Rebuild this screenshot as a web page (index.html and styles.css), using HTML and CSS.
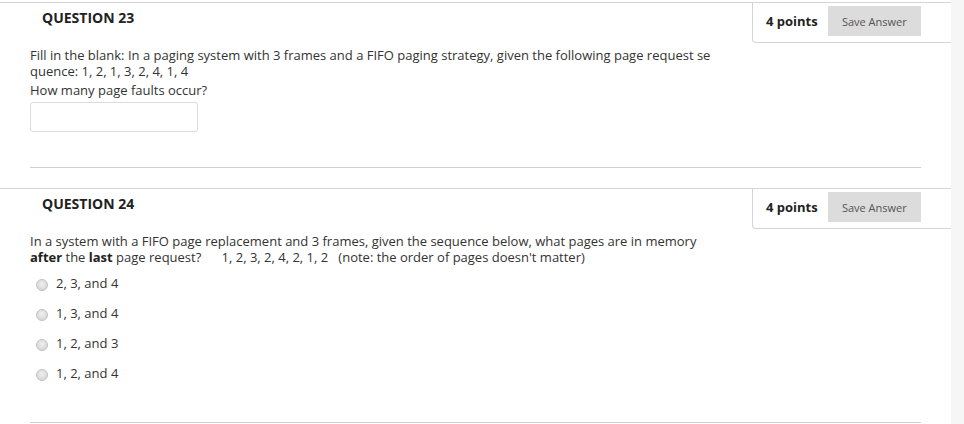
FILE: index.html
```html
<!DOCTYPE html>
<html>
<head>
<meta charset="utf-8">
<link rel="stylesheet" href="styles.css">
</head>
<body>
<div class="page">
  <main class="main">
    <section class="question">
      <div class="qhead">
        <h2 class="qtitle">QUESTION 23</h2>
        <div class="points">
          <span class="pts">4 points</span>
          <button class="save">Save Answer</button>
        </div>
      </div>
      <div class="qbody">
        <p class="qtext">Fill in the blank: In a paging system with 3 frames and a FIFO paging strategy, given the following page request se<br>quence: 1, 2, 1, 3, 2, 4, 1, 4</p>
        <p class="qtext qtext-next">How many page faults occur?</p>
        <input class="answer" type="text">
      </div>
      <div class="sep sep1"></div>
    </section>
    <section class="question q2">
      <div class="qhead">
        <h2 class="qtitle">QUESTION 24</h2>
        <div class="points">
          <span class="pts">4 points</span>
          <button class="save">Save Answer</button>
        </div>
      </div>
      <div class="qbody">
        <p class="qtext">In a system with a FIFO page replacement and 3 frames, given the sequence below, what pages are in memory<br><b>after</b> the <b>last</b> page request? &nbsp;&nbsp;&nbsp;&nbsp; 1, 2, 3, 2, 4, 2, 1, 2 &nbsp; (note: the order of pages doesn't matter)</p>
        <ul class="options">
          <li class="opt"><span class="radio"></span>2, 3, and 4</li>
          <li class="opt"><span class="radio"></span>1, 3, and 4</li>
          <li class="opt"><span class="radio"></span>1, 2, and 3</li>
          <li class="opt"><span class="radio"></span>1, 2, and 4</li>
        </ul>
      </div>
      <div class="sep sep2"></div>
    </section>
  </main>
  <aside class="side"></aside>
</div>
</body>
</html>
```
FILE: styles.css
```css
* { box-sizing: border-box; }
html, body { margin: 0; padding: 0; background: #fff; }
body {
  font-family: "Open Sans", "Noto Sans", sans-serif;
  color: #333;
  font-size: 13px;
}
.page {
  display: flex;
  width: 964px;
  height: 424px;
  overflow: hidden;
}
.main {
  width: 951px;
  padding-top: 2px;
  background: #fff;
}
.side {
  flex: 1;
  background: #f6f6f6;
}
.question {
  border-top: 1px solid #d4d4d4;
}
.qhead {
  display: flex;
  justify-content: space-between;
  align-items: flex-start;
  height: 40px;
}
.qtitle {
  margin: 0;
  padding: 5px 0 0 42px;
  font-size: 14px;
  line-height: 19px;
  font-weight: 700;
  color: #222;
}
.points {
  width: 199px;
  height: 40px;
  border-left: 1px solid #d4d4d4;
  border-bottom: 1px solid #d4d4d4;
  border-bottom-left-radius: 4px;
  display: flex;
  align-items: center;
  padding: 3px 30px 6px 13px;
  gap: 10px;
}
.pts {
  font-size: 13px;
  font-weight: 700;
  color: #222;
  white-space: nowrap;
}
.save {
  height: 30px;
  width: 95px;
  border: none;
  background: #dcdcdc;
  color: #555;
  font-family: "Open Sans", "Noto Sans", sans-serif;
  font-size: 11px;
  padding: 0;
}
.qbody {
  padding: 4px 30px 0 30px;
}
.qtext {
  margin: 0;
  line-height: 16px;
}
.qtext-next { margin-top: 3px; }
.qtext b { font-weight: 700; color: #222; }
.answer {
  display: block;
  margin-top: 4px;
  width: 168px;
  height: 30px;
  border: 1px solid #dcdcdc;
  border-radius: 3px;
  background: #fff;
}
.sep {
  margin: 0 30px;
  border-top: 1px solid #cfcfcf;
}
.sep1 { margin-top: 35px; margin-bottom: 20px; }
.options {
  list-style: none;
  margin: 3px 0 0;
  padding: 0;
}
.opt {
  display: flex;
  align-items: center;
  height: 30px;
  padding-left: 6px;
  gap: 8px;
}
.radio {
  width: 12px;
  height: 12px;
  border-radius: 50%;
  border: 1px solid #c2c2c2;
  background: radial-gradient(circle at 50% 40%, #f0f0f0 0%, #dcdcdc 60%, #cfcfcf 100%);
  margin-top: 3px;
}
.sep2 { margin-top: 34px; }
```
